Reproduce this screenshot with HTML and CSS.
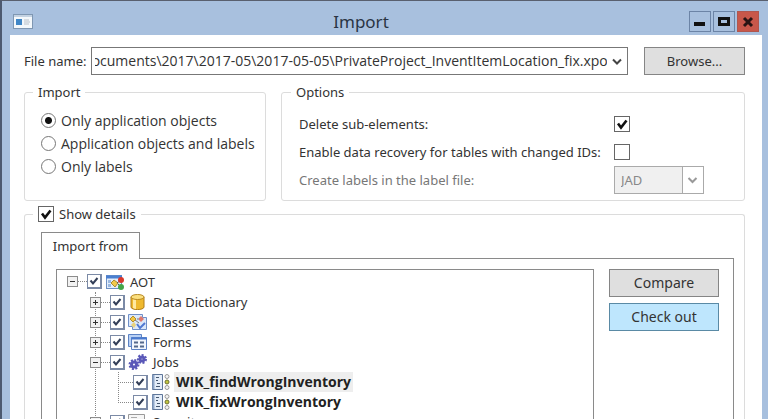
FILE: index.html
```html
<!DOCTYPE html>
<html lang="en">
<head>
    <meta charset="UTF-8">
    <meta name="viewport" content="width=device-width, initial-scale=1.0">
    <title>Import</title>
    <link rel="stylesheet" href="styles.css">
</head>
<body>
    <div class="window">
        <header class="titlebar">
            <svg class="app-icon" width="20" height="15" viewBox="0 0 20 15">
                <rect x=".5" y=".5" width="19" height="14" fill="#f4f8fb" stroke="#7f97b2"/>
                <path d="M1 2h18" stroke="#c3d2e2" stroke-width="2"/>
                <rect x="3" y="5" width="6" height="6" fill="#3f86c6"/>
                <path d="M11 6h5M11 8h6M11 10h5" stroke="#b9c0c8"/>
            </svg>
            <h1>Import</h1>
            <div class="window-buttons">
                <button class="win-btn" aria-label="Minimize">
                    <svg width="12" height="12" viewBox="0 0 12 12"><rect x="0" y="6" width="11" height="4" fill="#111"/></svg>
                </button>
                <button class="win-btn" aria-label="Maximize">
                    <svg width="12" height="12" viewBox="0 0 12 12"><rect x="1.500" y="2.500" width="9" height="6" fill="none" stroke="#111" stroke-width="3"/></svg>
                </button>
                <button class="win-btn close" aria-label="Close">
                    <svg width="12" height="12" viewBox="0 0 12 12"><path d="M2 2l8 8M10 2l-8 8" stroke="#2a1414" stroke-width="3"/></svg>
                </button>
            </div>
        </header>

        <main class="content">
            <div class="file-row">
                <label for="fileName">File name:</label>
                <div class="combo">
                    <input type="text" id="fileName" value="Documents\2017\2017-05\2017-05-05\PrivateProject_InventItemLocation_fix.xpo">
                    <button class="combo-arrow" aria-label="Show recent files">
                        <svg width="10" height="8" viewBox="0 0 10 8"><path d="M1 1.500l4 4 4-4" fill="none" stroke="#444" stroke-width="2"/></svg>
                    </button>
                </div>
                <button class="btn browse">Browse...</button>
            </div>

            <div class="groups">
                <fieldset class="group import-group">
                    <legend>Import</legend>
                    <label class="radio"><input type="radio" name="what" checked>Only application objects</label>
                    <label class="radio"><input type="radio" name="what">Application objects and labels</label>
                    <label class="radio"><input type="radio" name="what">Only labels</label>
                </fieldset>

                <fieldset class="group options-group">
                    <legend>Options</legend>
                    <div class="options">
                        <label for="deleteSub">Delete sub-elements:</label>
                        <input type="checkbox" class="check" id="deleteSub" checked>
                        <label for="recovery">Enable data recovery for tables with changed IDs:</label>
                        <input type="checkbox" class="check" id="recovery">
                        <label for="labelFile" class="disabled">Create labels in the label file:</label>
                        <select id="labelFile" disabled><option>JAD</option></select>
                    </div>
                </fieldset>
            </div>

            <fieldset class="group details">
                <legend><label class="show-details"><input type="checkbox" class="check" checked>Show details</label></legend>
                <button class="tab">Import from</button>
                <div class="panel">
                    <ul class="tree">
                        <li>
                            <div class="node root">
                                <button class="toggle open" aria-label="Collapse AOT"></button>
                                <input type="checkbox" id="aot" checked>
                                <svg width="20" height="16" viewBox="0 0 20 16">
                                    <rect x="1.500" y="1.500" width="15" height="13" fill="#e3eefb" stroke="#6d8fc4"/>
                                    <path d="M1 3h16" stroke="#4a7fd0" stroke-width="3"/>
                                    <path d="M3 6h3v3H3zM3 10h3v3H3z" fill="#9bb9e2"/>
                                    <path d="M6 9l3-3 4 3-3 4z" fill="#f0c94a" stroke="#a98a30"/>
                                    <path d="M12 9l4-3M13 10l3 3" stroke="#555"/>
                                    <circle cx="16" cy="6" r="3" fill="#d8382c"/>
                                    <circle cx="16" cy="13" r="3" fill="#44a548"/>
                                </svg>
                                <label for="aot">AOT</label>
                            </div>
                            <ul>
                                <li>
                                    <div class="node">
                                        <button class="toggle" aria-label="Expand Data Dictionary"></button>
                                        <input type="checkbox" id="dict" checked>
                                        <svg width="20" height="16" viewBox="0 0 20 16">
                                            <path d="M3 3v10c0 3.400 13 3.400 13 0V3z" fill="#efb92e" stroke="#b07c18"/>
                                            <path d="M5 4v10c1 .7 2 .9 3 1V5z" fill="#ffe9a0"/>
                                            <ellipse cx="9.500" cy="3" rx="6.500" ry="2.500" fill="#fbdf7e" stroke="#b98a24"/>
                                        </svg>
                                        <label for="dict">Data Dictionary</label>
                                    </div>
                                </li>
                                <li>
                                    <div class="node">
                                        <button class="toggle" aria-label="Expand Classes"></button>
                                        <input type="checkbox" id="classes" checked>
                                        <svg width="20" height="16" viewBox="0 0 20 16">
                                            <path d="M.5.5h14v3h4v12h-14v-3h-4z" fill="#dbe8fa" stroke="#6f8fc8"/>
                                            <path d="M2 5l3-3 3 3-3 3z" fill="#f2c744" stroke="#b48f2c"/>
                                            <path d="M7 6l4 3M9 5h3" stroke="#777"/>
                                            <path d="M11 4l2-2 3 3-3 3-2-2z" fill="#e0786c"/>
                                            <path d="M3 11l3-3 2 3-2 3z" fill="#e9d27c"/>
                                            <path d="M9 10l3 4 5-5" fill="none" stroke="#4f78d2" stroke-width="2"/>
                                        </svg>
                                        <label for="classes">Classes</label>
                                    </div>
                                </li>
                                <li>
                                    <div class="node">
                                        <button class="toggle" aria-label="Expand Forms"></button>
                                        <input type="checkbox" id="forms" checked>
                                        <svg width="20" height="16" viewBox="0 0 20 16">
                                            <path d="M.5.5h13v12H.5z" fill="#b9d1f4" stroke="#5c82c4"/>
                                            <path d="M3.500 3.500h15v12h-15z" fill="#f1f6fd" stroke="#5c82c4"/>
                                            <path d="M3 4.500h16" stroke="#4a7bd0" stroke-width="2"/>
                                            <path d="M6 8.500h4M12 8.500h4M6 12.500h4M12 12.500h4" stroke="#54698c" stroke-width="2"/>
                                        </svg>
                                        <label for="forms">Forms</label>
                                    </div>
                                </li>
                                <li>
                                    <div class="node">
                                        <button class="toggle open" aria-label="Collapse Jobs"></button>
                                        <input type="checkbox" id="jobs" checked>
                                        <svg width="20" height="16" viewBox="0 0 20 16">
                                            <g fill="none" stroke="#5a58b8">
                                                <circle cx="6" cy="10.500" r="2.500" stroke-width="3"/>
                                                <circle cx="6" cy="10.500" r="4.500" stroke-width="2" stroke-dasharray="2 1.500"/>
                                                <circle cx="14" cy="5" r="2" stroke-width="3"/>
                                                <circle cx="14" cy="5" r="4" stroke-width="2" stroke-dasharray="2 1.600"/>
                                            </g>
                                        </svg>
                                        <label for="jobs">Jobs</label>
                                    </div>
                                    <ul>
                                        <li>
                                            <div class="node leaf">
                                                <input type="checkbox" id="find" checked>
                                                <svg width="20" height="16" viewBox="0 0 20 16">
                                                    <path d="M1.500.5h10v15h-10z" fill="#e4edf8" stroke="#5f7699"/>
                                                    <path d="M2.500 1v14" stroke="#8fa6c8" stroke-width="2"/>
                                                    <path d="M5 3.500h3M5 6.500h2M6 9.500h3M5 12.500h4" stroke="#44566f"/>
                                                    <circle cx="16" cy="2.500" r="2" fill="#f4f4f4" stroke="#999"/>
                                                    <circle cx="16" cy="8" r="2" fill="#c2c640" stroke="#6e7030"/>
                                                    <circle cx="16" cy="13.500" r="2" fill="#f4f4f4" stroke="#999"/>
                                                </svg>
                                                <label for="find" class="selected">WIK_findWrongInventory</label>
                                            </div>
                                        </li>
                                        <li>
                                            <div class="node leaf">
                                                <input type="checkbox" id="fix" checked>
                                                <svg width="20" height="16" viewBox="0 0 20 16">
                                                    <path d="M1.500.5h10v15h-10z" fill="#e4edf8" stroke="#5f7699"/>
                                                    <path d="M2.500 1v14" stroke="#8fa6c8" stroke-width="2"/>
                                                    <path d="M5 3.500h3M5 6.500h2M6 9.500h3M5 12.500h4" stroke="#44566f"/>
                                                    <circle cx="16" cy="2.500" r="2" fill="#f4f4f4" stroke="#999"/>
                                                    <circle cx="16" cy="8" r="2" fill="#c2c640" stroke="#6e7030"/>
                                                    <circle cx="16" cy="13.500" r="2" fill="#f4f4f4" stroke="#999"/>
                                                </svg>
                                                <label for="fix">WIK_fixWrongInventory</label>
                                            </div>
                                        </li>
                                    </ul>
                                </li>
                                <li>
                                    <div class="node">
                                        <button class="toggle" aria-label="Expand Security"></button>
                                        <input type="checkbox" id="security" checked>
                                        <svg width="20" height="16" viewBox="0 0 20 16">
                                            <path d="M.5.5h16v15H.5z" fill="#f6f6f6" stroke="#999"/>
                                            <path d="M3 3.500h6M3 6.500h9" stroke="#aaa"/>
                                        </svg>
                                        <label for="security">Security</label>
                                    </div>
                                </li>
                            </ul>
                        </li>
                    </ul>
                    <div class="actions">
                        <button class="btn">Compare</button>
                        <button class="btn active">Check out</button>
                    </div>
                </div>
            </fieldset>
        </main>
    </div>

    <script>
        // Keep the end of a long path in view
        const fileName = document.getElementById('fileName');
        fileName.scrollLeft = fileName.scrollWidth;
    </script>
</body>
</html>
```

FILE: styles.css
```css
* {
    box-sizing: border-box;
}

body {
    margin: 0;
    font-family: "Noto Sans", "Open Sans", sans-serif;
    font-size: 13px;
    line-height: 20px;
    color: #333;
    overflow: hidden;
}

button, input, select {
    font: inherit;
    color: inherit;
    margin: 0;
}

.window {
    display: flex;
    flex-direction: column;
    height: 100vh;
    padding: 0 6px 0 8px;
    background-color: #a8c0de;
    border-top: 1px solid #59606f;
    border-left: 2px solid #4d5a70;
}

/* Title bar */
.titlebar {
    display: flex;
    align-items: center;
    height: 34px;
    flex-shrink: 0;
    padding: 7px 3px 0;
}

.app-icon {
    display: block;
}

h1 {
    flex: 1;
    margin: 0;
    font-size: 17px;
    font-weight: normal;
    line-height: 24px;
    text-align: center;
    color: #2a3444;
}

.window-buttons {
    display: flex;
    gap: 2px;
}

.win-btn {
    display: flex;
    align-items: center;
    justify-content: center;
    width: 22px;
    height: 21px;
    padding: 0;
    background-color: #a8c0de;
    border: 1px solid #6c84a6;
}

.win-btn.close {
    background-color: #c8574a;
    border-color: #b0564e;
}

/* Form */
.content {
    display: flex;
    flex-direction: column;
    flex: 1;
    min-height: 0;
    padding: 12px 17px 0 14px;
    background-color: #fff;
}

.file-row {
    display: flex;
    align-items: center;
    gap: 5px;
}

.combo {
    display: flex;
    flex: 1;
    height: 28px;
    border: 1px solid #777;
}

.combo input {
    flex: 1;
    min-width: 0;
    padding: 0 0 0 3px;
    border: 0;
    outline: 0;
    background: none;
    font-family: "Open Sans", sans-serif;
    font-size: 14px;
}

.combo-arrow {
    width: 20px;
    padding: 0;
    border: 0;
    background: none;
}

.btn {
    height: 28px;
    padding: 0;
    background-color: #dfdfdf;
    border: 1px solid #858585;
}

.btn.active {
    background-color: #bee6fd;
    border-color: #5a8aa5;
}

.browse {
    width: 101px;
    margin-left: 11px;
}

.groups {
    display: flex;
    gap: 15px;
    margin-top: 7px;
}

.group {
    min-width: 0;
    margin: 0;
    border: 1px solid #dcdcdc;
    border-radius: 3px;
}

.group legend {
    padding: 0 5px;
}

.import-group {
    flex: 0 0 242px;
    height: 119px;
    padding: 7px 0 0 16px;
}

.import-group legend {
    margin-left: -8px;
}

.radio {
    display: flex;
    align-items: center;
    gap: 5px;
    height: 23px;
    font-family: "Open Sans", sans-serif;
    font-size: 14px;
}

.radio input {
    appearance: none;
    width: 15px;
    height: 15px;
    border: 1px solid #777;
    border-radius: 50%;
}

.radio input:checked {
    background: radial-gradient(circle, #111 0 3px, #fff 4px);
}

.options-group {
    flex: 1;
    padding: 8px 0 0 17px;
}

.options-group legend {
    margin-left: -8px;
}

.options {
    display: grid;
    grid-template-columns: 310px 90px;
    grid-auto-rows: 28px;
    gap: 0 5px;
    align-items: center;
}

.options label {
    white-space: nowrap;
}

.options .disabled {
    color: #777;
}

.check {
    appearance: none;
    width: 16px;
    height: 16px;
    border: 1px solid #666;
    background-color: #fff;
}

.check:checked {
    background-image: url("data:image/svg+xml,%3Csvg xmlns='http://www.w3.org/2000/svg' viewBox='0 0 14 14'%3E%3Cpath d='M3 6.500l3 4 5.500-7' fill='none' stroke='%23111' stroke-width='2.600'/%3E%3C/svg%3E");
}

select {
    appearance: none;
    height: 28px;
    padding: 0 6px;
    border: 1px solid #aaa;
    border-radius: 0;
    background: url("data:image/svg+xml,%3Csvg xmlns='http://www.w3.org/2000/svg' viewBox='0 0 21 26'%3E%3Cpath d='M0 0h21v26H0z' fill='%23fff'/%3E%3Cpath d='M.5 0v26' stroke='%23aaa'/%3E%3Cpath d='M6.500 11l4 4 4-4' fill='none' stroke='%23999' stroke-width='2'/%3E%3C/svg%3E") right / 21px 26px no-repeat #f0f0f0;
}

select:disabled {
    color: #888;
    opacity: 1;
}

/* Details */
.details {
    display: flex;
    flex-direction: column;
    flex: 1;
    min-height: 0;
    margin-top: 3px;
    padding: 8px 10px 0 16px;
    border-bottom: 0;
    border-radius: 3px 3px 0 0;
}

.details legend {
    margin-left: -8px;
}

.show-details {
    display: flex;
    align-items: center;
    gap: 5px;
}

.tab {
    align-self: flex-start;
    position: relative;
    width: 99px;
    height: 27px;
    margin-bottom: -1px;
    padding: 0;
    background-color: #fff;
    border: 1px solid #8a8a8a;
    border-bottom: 0;
}

.panel {
    display: flex;
    align-items: flex-start;
    gap: 15px;
    flex: 1;
    min-height: 0;
    padding: 10px 14px 0;
    border: 1px solid #8a8a8a;
    border-bottom: 0;
}

.actions {
    display: flex;
    flex-direction: column;
    gap: 6px;
    width: 110px;
    font-size: 14px;
}

/* Tree */
.tree {
    flex: 1;
    align-self: stretch;
    overflow: hidden;
    padding: 1px 0 0 10px;
    border: 1px solid #8a8a8a;
    border-bottom: 0;
}

.tree, .tree ul {
    list-style: none;
    margin: 0;
}

.tree ul {
    margin-left: 28px;
    padding: 0;
    border-left: 1px dotted #888;
}

.tree ul .node {
    margin-left: -6px;
}

.node {
    display: flex;
    align-items: center;
    height: 20px;
}

.node.root {
    height: 21px;
}

.node svg {
    flex-shrink: 0;
    margin: 0 5px 0 3px;
}

.toggle {
    width: 11px;
    height: 11px;
    padding: 0;
    border: 1px solid #8c8c8c;
    background:
        linear-gradient(#333, #333) center / 5px 1px no-repeat,
        linear-gradient(#333, #333) center / 1px 5px no-repeat,
        #f2f2f2;
}

.toggle.open {
    background:
        linear-gradient(#333, #333) center / 5px 1px no-repeat,
        #f2f2f2;
}

.toggle::after {
    content: "";
    display: block;
    width: 9px;
    margin-left: 10px;
    border-top: 1px dotted #888;
}

.node input {
    appearance: none;
    width: 15px;
    height: 15px;
    margin-left: 9px;
    border: 1px solid #7b8aa6;
    border-width: 1px 2px 2px 1px;
    background-color: #fff;
}

.node input:checked {
    background-image: url("data:image/svg+xml,%3Csvg xmlns='http://www.w3.org/2000/svg' viewBox='0 0 12 12'%3E%3Cpath d='M2.500 5.500l2.500 3 4.500-5.500' fill='none' stroke='%23333f58' stroke-width='2'/%3E%3C/svg%3E");
}

.tree ul ul {
    margin-left: 22px;
    border-left: 0;
}

.tree ul .leaf {
    margin-left: 0;
    font-family: "Open Sans", sans-serif;
    font-size: 14px;
    font-weight: bold;
    color: #222;
}

.leaf::before {
    content: "";
    align-self: flex-start;
    width: 14px;
    height: 10px;
    margin-right: -9px;
    border-left: 1px dotted #888;
    border-bottom: 1px dotted #888;
}

.leaf input {
    margin-left: 9px;
}

/* Carry the line past the first child down to the next one */
li + li > .leaf::before {
    height: 20px;
    margin-top: -10px;
}

.selected {
    margin-left: -2px;
    padding: 0 2px;
    background-color: #eee;
}
```
